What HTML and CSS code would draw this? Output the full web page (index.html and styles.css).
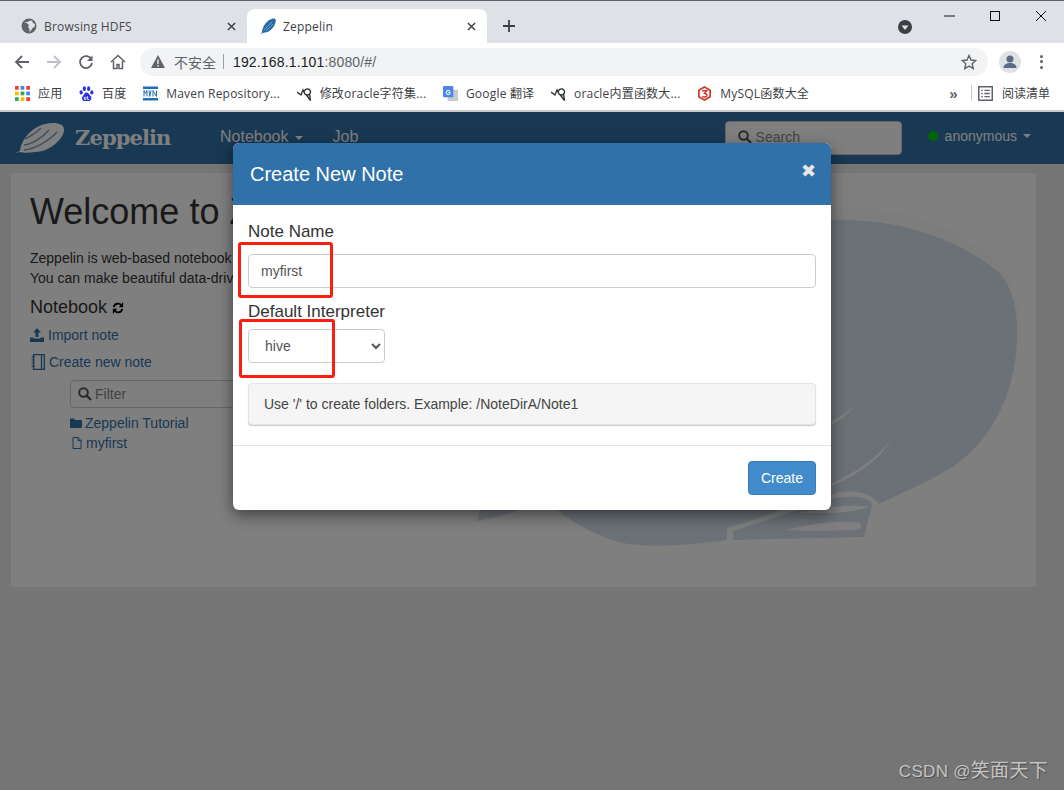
FILE: index.html
```html
<!DOCTYPE html>
<html lang="zh-CN">
<head>
<meta charset="utf-8">
<title>Zeppelin</title>
<link rel="stylesheet" href="styles.css">
</head>
<body>
<div class="window">
  <header class="chrome">
    <div class="tabstrip">
      <div class="tab">
        <svg class="tab-icon" viewBox="0 0 16 16"><circle cx="8" cy="8" r="7.500" fill="#5f6368"/><path d="M2.500 4.500l3 .5 2.500 2-1 2 1.500 2v3l2-2 1-2 2-1 .5-3-2-1-1-2.500-3 .5-1.500 1z" fill="#dee1e6"/></svg>
        <span class="tab-title">Browsing HDFS</span>
        <svg class="tab-x" viewBox="0 0 10 10"><path d="M1 1l8 8M9 1l-8 8" stroke="#3c4043" stroke-width="1.600" fill="none"/></svg>
      </div>
      <div class="tab active">
        <svg class="tab-icon" viewBox="0 0 16 16"><path d="M0 15.500l2-1C2 9 7 1.500 13 .5c3-.5 3 2 2.500 4C14 10 9 14.500 5 14.500c-2 .5-3.500 1-5 1z" fill="#2a6ba8"/><path d="M4 12l8-8M6 13l7-7" stroke="#8bb4d8" stroke-width=".7"/></svg>
        <span class="tab-title">Zeppelin</span>
        <svg class="tab-x" viewBox="0 0 10 10"><path d="M1 1l8 8M9 1l-8 8" stroke="#3c4043" stroke-width="1.600" fill="none"/></svg>
      </div>
      <svg class="tab-plus" viewBox="0 0 12 12"><path d="M6 0v12M0 6h12" stroke="#3c4043" stroke-width="1.800"/></svg>
      <div class="strip-space"></div>
      <svg class="tab-search" viewBox="0 0 14 14"><circle cx="7" cy="7" r="7" fill="#3c4043"/><path d="M3.500 5.500h7L7 10z" fill="#dee1e6"/></svg>
      <div class="winctl">
        <svg viewBox="0 0 46 30"><path d="M18 15h11" stroke="#111" stroke-width="1"/></svg>
        <svg viewBox="0 0 46 30"><rect x="18.500" y="10.500" width="9" height="9" fill="none" stroke="#111"/></svg>
        <svg viewBox="0 0 46 30"><path d="M18 10l10 10M28 10l-10 10" stroke="#111" stroke-width="1"/></svg>
      </div>
    </div>
    <div class="toolbar">
      <div class="navbtns">
        <svg viewBox="0 0 16 16"><path d="M15 8H2M8 2L2 8l6 6" fill="none" stroke="#5f6368" stroke-width="1.800"/></svg>
        <svg viewBox="0 0 16 16"><path d="M1 8h13M8 2l6 6-6 6" fill="none" stroke="#bdc1c6" stroke-width="1.800"/></svg>
        <svg viewBox="0 0 16 16"><path d="M13.500 5.500A6 6 0 1 0 14 9" fill="none" stroke="#5f6368" stroke-width="1.800"/><path d="M14.500 1.500v5.500H9z" fill="#5f6368"/></svg>
        <svg viewBox="0 0 16 16"><path d="M1 8l7-6.500L15 8M3.500 7v7.500h3.500v-4h2v4h3.500V7" fill="none" stroke="#5f6368" stroke-width="1.500"/></svg>
      </div>
      <div class="omnibox">
        <svg class="warn" viewBox="0 0 14 13"><path d="M7 0l7 13H0z" fill="#5f6368"/><path d="M6.300 4.500h1.400v4.500H6.300zM6.300 10h1.400v1.500H6.300z" fill="#f1f3f4"/></svg>
        <span class="insecure">不安全</span>
        <span class="omni-sep"></span>
        <span class="url">192.168.1.101<span class="url-rest">:8080/#/</span></span>
        <svg class="star" viewBox="0 0 16 16"><path d="M8 1.500l2 4.500 4.800.5-3.600 3.200 1 4.800L8 12.100l-4.200 2.400 1-4.800L1.200 6.500 6 6z" fill="none" stroke="#5f6368" stroke-width="1.400"/></svg>
      </div>
      <span class="avatar"><svg viewBox="0 0 22 22"><circle cx="11" cy="8" r="3.500" fill="#5b6a85"/><path d="M4.500 17c0-3.500 3-5 6.500-5s6.500 1.500 6.500 5z" fill="#5b6a85"/></svg></span>
      <span class="kebab"><i></i><i></i><i></i></span>
    </div>
    <nav class="bookmarks">
      <a class="bm"><svg class="bm-icon" viewBox="0 0 14 14"><g><rect width="3.500" height="3.500" fill="#ea4335"/><rect x="5.200" width="3.500" height="3.500" fill="#4285f4"/><rect x="10.500" width="3.500" height="3.500" fill="#ea4335"/><rect y="5.200" width="3.500" height="3.500" fill="#fbbc05"/><rect x="5.200" y="5.200" width="3.500" height="3.500" fill="#34a853"/><rect x="10.500" y="5.200" width="3.500" height="3.500" fill="#4285f4"/><rect y="10.500" width="3.500" height="3.500" fill="#34a853"/><rect x="5.200" y="10.500" width="3.500" height="3.500" fill="#fbbc05"/><rect x="10.500" y="10.500" width="3.500" height="3.500" fill="#ea4335"/></g></svg>应用</a>
      <a class="bm"><svg class="bm-icon" viewBox="0 0 14 14"><g fill="#2932e1"><ellipse cx="2" cy="6" rx="1.500" ry="2"/><ellipse cx="5" cy="2.500" rx="1.500" ry="2.200"/><ellipse cx="9" cy="2.500" rx="1.500" ry="2.200"/><ellipse cx="12" cy="6" rx="1.500" ry="2"/><path d="M7 6c2 0 2.500 2 4 3.500S11 14 9 14H5C3 14 2 11 3.500 9.500S5 6 7 6z"/></g><path d="M5 10v2.500h1.500V10M8 9.500v3h1.500" fill="none" stroke="#fff" stroke-width=".8"/></svg>百度</a>
      <a class="bm"><svg class="bm-icon" viewBox="0 0 15 14"><rect width="15" height="2.500" fill="#1e6fb8"/><rect y="11.500" width="15" height="2.500" fill="#1e6fb8"/><path d="M1 10V4l1.500 3L4 4v6M6 4l.8 6L8 4M10 10V4l3.500 6V4" fill="none" stroke="#1e6fb8" stroke-width="1"/></svg>Maven Repository...</a>
      <a class="bm"><svg class="bm-icon" viewBox="0 0 15 15"><path d="M0 6l4 3 2-5 2 4 1 .5a3 3 0 1 0-1.500-3M9 8.500l4.500 6-1-7" fill="none" stroke="#333" stroke-width="1.400"/></svg>修改oracle字符集...</a>
      <a class="bm"><svg class="bm-icon" viewBox="0 0 16 16"><rect x="5" y="4" width="11" height="12" fill="#c8ccd0"/><rect width="11" height="12" rx="1" fill="#4a86e8"/><text x="5.500" y="9.500" class="g-glyph">G</text></svg>Google 翻译</a>
      <a class="bm"><svg class="bm-icon" viewBox="0 0 15 15"><path d="M0 6l4 3 2-5 2 4 1 .5a3 3 0 1 0-1.500-3M9 8.500l4.500 6-1-7" fill="none" stroke="#333" stroke-width="1.400"/></svg>oracle内置函数大...</a>
      <a class="bm"><svg class="bm-icon" viewBox="0 0 15 16"><path d="M7.500 1l6 3.500v7l-6 3.500-6-3.500v-7z" fill="none" stroke="#d1352b" stroke-width="1.800"/><path d="M5 5h5L7.500 8c2 0 3 1 2.500 2.500S6.500 12 5 11" fill="none" stroke="#d1352b" stroke-width="1.500"/></svg>MySQL函数大全</a>
      <span class="bm-space"></span>
      <span class="chev">»</span>
      <span class="bm-sep"></span>
      <a class="bm read"><svg class="bm-icon" viewBox="0 0 14 14"><rect x=".7" y=".7" width="12.600" height="12.600" fill="none" stroke="#5f6368" stroke-width="1.400"/><path d="M3 4h1.500M6 4h5M3 7h1.500M6 7h5M3 10h1.500M6 10h5" stroke="#5f6368" stroke-width="1.200"/></svg>阅读清单</a>
    </nav>
  </header>

  <main class="page">
    <div class="navbar">
      <div class="brand">
        <svg class="brand-icon" viewBox="0 0 50 32"><path d="M0 31l5-2C6 20 14 6 30 2c10-2 20-1 19 7-2 10-16 21-29 21-6 1-12 1-15 0z" fill="#fff"/><path d="M9 23c8-1 18-7 25-15M9 28c10-1 24-8 33-18M10 17c6-3 12-7 16-11" stroke="#7f9fbc" stroke-width="1.500" fill="none"/></svg>
        <span class="brand-name">Zeppelin</span>
      </div>
      <ul class="menu">
        <li>Notebook<b class="caret"></b></li>
        <li>Job</li>
      </ul>
      <div class="nav-space"></div>
      <div class="search">
        <svg class="ico14 dark" viewBox="0 0 14 14"><circle cx="5.500" cy="5.500" r="4.300" fill="none" stroke="currentColor" stroke-width="2"/><path d="M8.500 8.500l4.500 4.500" stroke="currentColor" stroke-width="2.400"/></svg>
        <span>Search</span>
      </div>
      <div class="user"><i class="status"></i>anonymous<b class="caret"></b></div>
    </div>

    <section class="jumbotron">
      <svg class="whale" viewBox="0 0 1025 414">
        <path class="halo" d="M800 37C880 26 960 55 995 100 1008 120 1010 145 1008 170L800 200z"/>
        <path class="body" d="M466 348C485 345 510 338 530 329L480 300z"/>
        <path class="body" d="M546 337C565 352 590 365 612 370 640 375 680 372 716 367L716 355C760 342 790 328 825 320 840 317 858 318 868 331 890 320 915 310 931 300 975 277 1004 227 1006 167 1007 142 1004 119 989 100 949 67 889 45 819 47L700 100z"/>
        <path class="body" d="M722 367L853 364 861 332C858 322 840 323 825 325 790 335 755 348 722 358z"/>
        <path class="feather" d="M821 313C850 300 870 285 880 267 865 285 845 300 821 310zM821 252C830 247 838 240 842 234 835 240 828 244 821 248z"/>
        <path class="feather" d="M859 334C840 340 810 341 787 340 810 336 835 330 859 334zM849 350C852 355 848 358 840 357 820 358 795 358 775 357 795 352 825 346 849 350z"/>
      </svg>
      <h1 class="welcome">Welcome to Zeppelin!</h1>
      <p class="intro">Zeppelin is web-based notebook that enables interactive data analytics.<br>You can make beautiful data-driven, interactive and collaborative documents with SQL, Scala and more.</p>
      <h4 class="nb-title">Notebook <svg class="ico12 ink" viewBox="0 0 14 14"><path d="M2 6a5 5 0 0 1 9-2M12 8a5 5 0 0 1-9 2" fill="none" stroke="currentColor" stroke-width="2.200"/><path d="M13 0v6H8zM1 14V8h5z" fill="currentColor"/></svg></h4>
      <div class="nb-actions">
        <a class="nb-link"><svg class="ico14" viewBox="0 0 14 14"><path d="M7 0l4 4.500H8.500V9h-3V4.500H3zM0 9.500h3.500v1h7v-1H14V14H0z" fill="currentColor"/></svg>Import note</a>
        <a class="nb-link note"><svg class="ico14 tall" viewBox="0 0 14 16"><path d="M2.500 .7h10.800v14.600H2.500zM10.500 .7v14.600" fill="none" stroke="currentColor" stroke-width="1.300"/><path d="M.5 3h3.500M.5 6h3.500M.5 9h3.500M.5 12h3.500" fill="none" stroke="currentColor" stroke-width="1.200"/></svg>Create new note</a>
      </div>
      <div class="filter">
        <div class="filter-box">
          <svg class="ico14 dark" viewBox="0 0 14 14"><circle cx="5.500" cy="5.500" r="4.300" fill="none" stroke="currentColor" stroke-width="2"/><path d="M8.500 8.500l4.500 4.500" stroke="currentColor" stroke-width="2.400"/></svg>
          <span>Filter</span>
        </div>
        <ul class="tree">
          <li><svg class="ico12" viewBox="0 0 12 10"><path d="M0 1.500A1 1 0 0 1 1 .5h3l1 1.500h6a1 1 0 0 1 1 1V9a1 1 0 0 1-1 1H1a1 1 0 0 1-1-1z" fill="currentColor"/></svg>Zeppelin Tutorial</li>
          <li class="file"><svg class="ico12" viewBox="0 0 10 12"><path d="M1 .5h5l3 3v8H1zM6 .5v3h3" fill="none" stroke="currentColor"/></svg>myfirst</li>
        </ul>
      </div>
    </section>

    <div class="backdrop"></div>

    <div class="modal">
      <div class="modal-head">
        <h4>Create New Note</h4>
        <span class="close">✖</span>
      </div>
      <div class="modal-body">
        <label class="field-label">Note Name</label>
        <input class="control" type="text" value="myfirst">
        <label class="field-label second">Default Interpreter</label>
        <select class="control select"><option>hive</option></select>
        <div class="well">Use '/' to create folders. Example: /NoteDirA/Note1</div>
      </div>
      <div class="modal-foot"><button class="btn">Create</button></div>
    </div>
  </main>

  <div class="mark mark-a"></div>
  <div class="mark mark-b"></div>
  <div class="watermark"><span class="wm-latin">CSDN @</span>笑面天下</div>
</div>
</body>
</html>
```
FILE: styles.css
```css
* { box-sizing: border-box; }
html, body { margin: 0; height: 100%; overflow: hidden; }
body { font-family: "Liberation Sans", Arial, "Noto Sans CJK SC", sans-serif; }
.window { position: relative; width: 1064px; height: 790px; display: flex; flex-direction: column; background: #ebebeb; overflow: hidden; }

.chrome { flex: none; height: 112px; display: flex; flex-direction: column; background: #fff; border-bottom: 2px solid #c9c9c9; }
.tabstrip { flex: none; height: 43px; display: flex; align-items: flex-start; background: #dee1e6; border-top: 1px solid #5f6368; padding: 8px 0 0 8px; position: relative; }
.tab { width: 239px; height: 34px; display: flex; align-items: center; padding: 0 11px 0 13px; font: 12px "Open Sans", "Noto Sans", sans-serif; color: #45494d; letter-spacing: .2px; }
.tab.active { width: 240px; background: #fff; border-radius: 8px 8px 0 0; color: #3c4043; padding-left: 13px; }
.tab-icon { width: 16px; height: 16px; flex: none; margin-right: 7px; }
.tab-title { flex: 1; white-space: nowrap; }
.tab-x { width: 9px; height: 9px; flex: none; }
.tab-plus { width: 12px; height: 12px; margin: 11px 0 0 16px; flex: none; }
.strip-space { flex: 1; }
.tab-search { width: 14px; height: 14px; margin: 11px 14px 0 0; flex: none; }
.winctl { display: flex; margin-top: -8px; flex: none; }
.winctl svg { width: 46px; height: 30px; display: block; }

.toolbar { flex: none; height: 37px; display: flex; align-items: center; padding-left: 14px; padding-top: 0; }
.navbtns { display: flex; gap: 16px; flex: none; margin-right: 14px; }
.navbtns svg { width: 16px; height: 16px; display: block; }
.omnibox { width: 848px; height: 28px; background: #f1f3f4; border-radius: 14px; display: flex; align-items: center; padding: 0 11px 0 11px; flex: none; }
.warn { width: 14px; height: 13px; flex: none; margin-right: 9px; }
.insecure { font: 14px "Noto Sans CJK SC", sans-serif; color: #5f6368; }
.omni-sep { width: 1px; height: 15px; background: #9aa0a6; margin: 0 9px 0 7px; }
.url { font: 14px "Liberation Sans", sans-serif; color: #202124; flex: 1; letter-spacing: .15px; }
.url-rest { color: #5f6368; }
.star { width: 16px; height: 16px; flex: none; }
.avatar { width: 22px; height: 22px; border-radius: 50%; background: #dee1e6; margin-left: 11px; flex: none; }
.avatar svg { width: 22px; height: 22px; display: block; }
.kebab { display: flex; flex-direction: column; gap: 2.500px; margin-left: 19px; flex: none; }
.kebab i { width: 3px; height: 3px; border-radius: 50%; background: #5f6368; display: block; }

.bookmarks { flex: none; height: 30px; display: flex; align-items: center; padding: 0 14px 0 15px; gap: 16.700px; font: 12px "Open Sans", "Noto Sans CJK SC", sans-serif; color: #3c4043; white-space: nowrap; margin-top: -2px; letter-spacing: .2px; }
.bm { display: flex; align-items: center; gap: 8px; }
.bm-icon { width: 15px; height: 15px; flex: none; }
.g-glyph { font: bold 7px "Liberation Sans", sans-serif; fill: #fff; text-anchor: middle; }
.bm-space { flex: 1; }
.chev { font: bold 15px "Liberation Sans", sans-serif; color: #5f6368; margin-right: -3.500px; }
.bm-sep { width: 1px; height: 16px; background: #c8cace; }
.read { margin-left: -10.700px; gap: 9px; letter-spacing: 0; }

.page { position: relative; flex: 1; min-height: 0; background: #ebebeb; display: flex; flex-direction: column; }
.navbar { flex: none; height: 52px; background: #3071a9; display: flex; align-items: center; padding: 0 33px 0 15px; color: #fff; }
.brand { display: flex; align-items: center; gap: 10px; width: 205px; flex: none; }
.brand-icon { width: 50px; height: 32px; flex: none; }
.brand-name { font: bold 21px "DejaVu Serif", serif; letter-spacing: -.9px; color: #fff; margin-top: -2px; }
.menu { display: flex; gap: 30px; list-style: none; margin: -2px 0 0; padding: 0; font-size: 16px; color: #fff; }
.menu li { white-space: nowrap; }
.caret { display: inline-block; width: 0; height: 0; border: 4px solid transparent; border-top-color: currentColor; border-bottom: 0; margin-left: 6px; vertical-align: middle; }
.nav-space { flex: 1; }
.search { width: 177px; height: 34px; margin-top: -1px; background: #fff; border: 1px solid #ccc; border-radius: 4px; display: flex; align-items: center; gap: 4px; padding: 0 0 2px 12px; font-size: 14px; color: #888; flex: none; margin-right: 26px; }
.ico14 { width: 14px; height: 14px; flex: none; }
.ico14.tall { width: 14px; height: 16px; }
.ico14.dark { color: #555; }
.ico12 { width: 12px; height: 12px; flex: none; }
.ink { color: #000; vertical-align: -1px; }
.user { display: flex; align-items: center; font-size: 14px; color: #fff; white-space: nowrap; margin: -4px 0 0 0; }
.status { width: 10px; height: 10px; border-radius: 50%; background: #00ce00; margin-right: 7px; }

.jumbotron { position: relative; margin: 9px 28px 0 11px; height: 414px; background: #fff; border-radius: 3px; padding: 0 19px; color: #333; flex: none; overflow: hidden; }
.whale { position: absolute; left: 0; top: 0; width: 1025px; height: 414px; }
.whale .halo { fill: #fafbfc; }
.whale .body { fill: #d6e3ee; }
.whale .feather { fill: #fff; }
.welcome { position: relative; margin: 17px 0 0; font-size: 36px; font-weight: 400; line-height: 44px; white-space: nowrap; }
.intro { position: relative; margin: 14px 0 0; font-size: 14px; line-height: 20px; white-space: nowrap; }
.nb-title { position: relative; margin: 9px 0 0; font-size: 18px; font-weight: 400; line-height: 20px; }
.nb-actions { position: relative; margin-top: 8px; display: flex; flex-direction: column; gap: 7px; }
.nb-link { display: flex; align-items: center; gap: 4px; font-size: 14px; line-height: 20px; color: #3071a9; }
.nb-link.note { padding-left: 1px; }
.filter { position: relative; margin: 8px 0 0 40px; width: 400px; }
.filter-box { height: 28px; width: 300px; background: #fff; border: 1px solid #ccc; border-radius: 4px; display: flex; align-items: center; gap: 3px; padding-left: 7px; font-size: 14px; color: #888; }
.tree { list-style: none; margin: 5px 0 0; padding: 0; font-size: 14px; line-height: 20px; color: #3071a9; }
.tree li { display: flex; align-items: center; gap: 3px; }
.tree .file { gap: 3px; padding-left: 1px; }

.backdrop { position: absolute; inset: 0; background: rgba(0, 0, 0, .5); }
.modal { position: absolute; left: 233px; top: 31px; width: 598px; height: 367px; background: #fff; border-radius: 6px; box-shadow: 0 5px 15px rgba(0, 0, 0, .5); display: flex; flex-direction: column; }
.modal-head { flex: none; height: 62px; background: #3071a9; color: #fff; border-radius: 6px 6px 0 0; display: flex; align-items: center; justify-content: space-between; padding: 0 15px 0 17px; }
.modal-head h4 { margin: 0; font-size: 20px; font-weight: 400; }
.close { font: 18px "DejaVu Sans", sans-serif; color: #e6e6e6; margin-top: -7px; }
.modal-body { flex: none; height: 241px; padding: 18px 15px 0; border-bottom: 1px solid #e5e5e5; display: flex; flex-direction: column; align-items: flex-start; }
.field-label { font-size: 17px; line-height: 18px; color: #333; }
.field-label.second { margin-top: 15px; }
.control { width: 568px; height: 34px; margin-top: 13px; border: 1px solid #ccc; border-radius: 4px; padding: 0 12px; font: 14px "Liberation Sans", sans-serif; color: #555; background: #fff; }
.select { width: 137px; margin-top: 8px; }
.well { width: 568px; height: 42px; margin-top: 20px; padding: 0 15px; display: flex; align-items: center; background: #f5f5f5; border: 1px solid #e3e3e3; border-radius: 4px; box-shadow: 0 1px 1px rgba(0, 0, 0, .2); font-size: 14px; color: #444; }
.modal-foot { flex: 1; display: flex; justify-content: flex-end; padding: 15px 15px 0 0; }
.btn { width: 68px; height: 34px; background: #428bca; border: 1px solid #357ebd; border-radius: 4px; color: #fff; font: 14px "Liberation Sans", sans-serif; padding: 0; }

.mark { position: absolute; border: 3px solid #fb1d10; border-radius: 3px; }
.mark-a { left: 238px; top: 242px; width: 95px; height: 56px; }
.mark-b { left: 239px; top: 319px; width: 96px; height: 59px; }
.watermark { position: absolute; right: 16px; top: 759px; font-size: 19px; line-height: 24px; color: #c4c4c4; font-family: "Liberation Sans", "Noto Sans CJK SC", sans-serif; letter-spacing: .3px; text-shadow: 1px 1px 1px #4a4a4a; }
.wm-latin { font-size: 17px; }
```
